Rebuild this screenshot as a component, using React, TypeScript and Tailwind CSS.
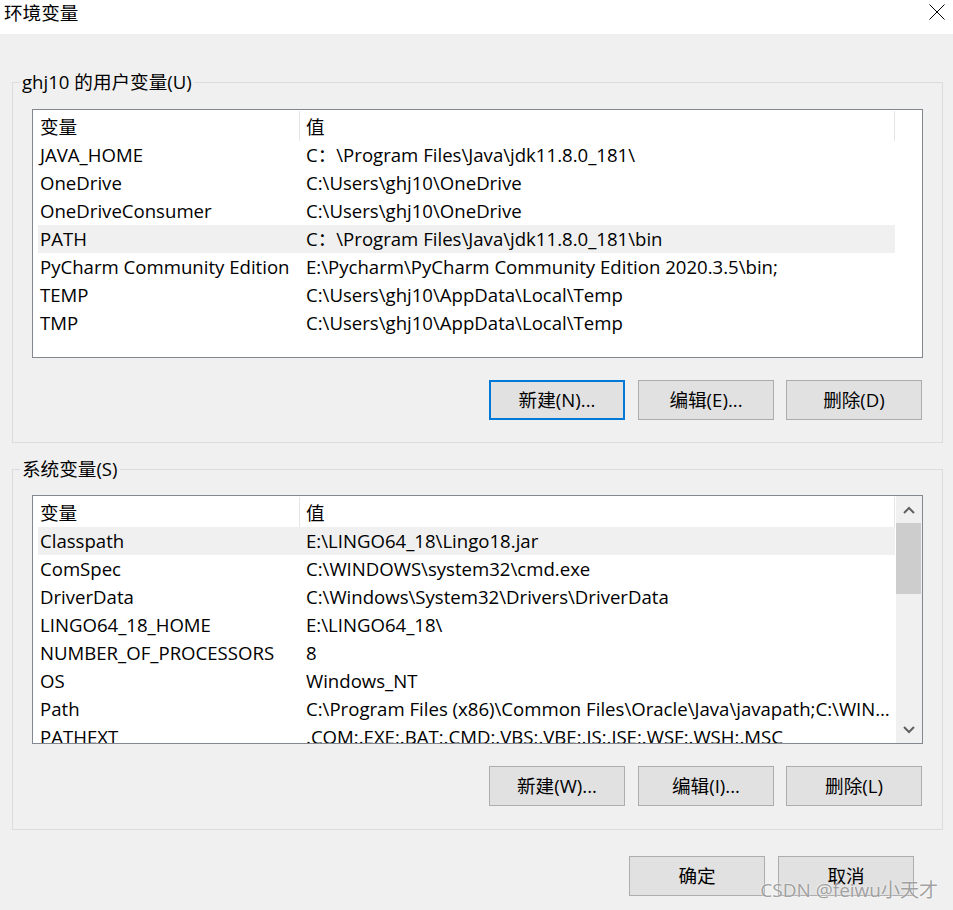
import React from 'react';

type Row = { name: string; value: string };

const USER_VARS: Row[] = [
  { name: 'JAVA_HOME', value: 'C：\\Program Files\\Java\\jdk11.8.0_181\\' },
  { name: 'OneDrive', value: 'C:\\Users\\ghj10\\OneDrive' },
  { name: 'OneDriveConsumer', value: 'C:\\Users\\ghj10\\OneDrive' },
  { name: 'PATH', value: 'C：\\Program Files\\Java\\jdk11.8.0_181\\bin' },
  { name: 'PyCharm Community Edition', value: 'E:\\Pycharm\\PyCharm Community Edition 2020.3.5\\bin;' },
  { name: 'TEMP', value: 'C:\\Users\\ghj10\\AppData\\Local\\Temp' },
  { name: 'TMP', value: 'C:\\Users\\ghj10\\AppData\\Local\\Temp' }
];

const SYSTEM_VARS: Row[] = [
  { name: 'Classpath', value: 'E:\\LINGO64_18\\Lingo18.jar' },
  { name: 'ComSpec', value: 'C:\\WINDOWS\\system32\\cmd.exe' },
  { name: 'DriverData', value: 'C:\\Windows\\System32\\Drivers\\DriverData' },
  { name: 'LINGO64_18_HOME', value: 'E:\\LINGO64_18\\' },
  { name: 'NUMBER_OF_PROCESSORS', value: '8' },
  { name: 'OS', value: 'Windows_NT' },
  {
    name: 'Path',
    value: 'C:\\Program Files (x86)\\Common Files\\Oracle\\Java\\javapath;C:\\WINDOWS\\system32;C:\\WINDOWS'
  },
  { name: 'PATHEXT', value: '.COM;.EXE;.BAT;.CMD;.VBS;.VBE;.JS;.JSE;.WSF;.WSH;.MSC' }
];

const Chevron = ({ up }: { up?: boolean }) => (
  <svg width="12" height="8" viewBox="0 0 12 8">
    <polyline
      points={up ? '1,7 6,2 11,7' : '1,1 6,6 11,1'}
      fill="none"
      stroke="#606060"
      strokeWidth="2"
    />
  </svg>
);

const ListBox = ({ rows, selected, scrollbar }: { rows: Row[]; selected: number; scrollbar?: boolean }) => (
  <div className="h-[249px] border border-[#828790] bg-white flex overflow-hidden">
    <div className="w-[862px] shrink-0 overflow-hidden">
      <div className="h-[31px] flex items-end leading-[28px]">
        <div className="w-[267px] h-[30px] pl-[7px] border-r border-[#e5e5e5] flex items-end">变量</div>
        <div className="flex-1 h-[30px] pl-[6px] border-r border-[#e5e5e5] flex items-end">值</div>
      </div>
      {rows.map((row, i) => (
        <div
          key={row.name}
          className={`h-[28px] ml-[5px] flex items-center leading-[28px] ${i === selected ? 'bg-[#f0f0f0]' : ''}`}
        >
          <div className="w-[261px] shrink-0 pl-[2px] whitespace-nowrap overflow-hidden">{row.name}</div>
          <div className="flex-1 min-w-0 pl-[7px] pr-[1px] truncate">{row.value}</div>
        </div>
      ))}
    </div>
    {scrollbar ? (
      <div className="flex-1 bg-[#f0f0f0] flex flex-col ml-[1px]">
        <div className="h-[27px] flex items-center justify-center">
          <Chevron up />
        </div>
        <div className="h-[71px] bg-[#cdcdcd] mr-[1px]" />
        <div className="flex-1" />
        <div className="h-[27px] flex items-center justify-center">
          <Chevron />
        </div>
      </div>
    ) : (
      <div className="flex-1" />
    )}
  </div>
);

const Button = ({ label, focused, className }: { label: string; focused?: boolean; className?: string }) => (
  <button
    className={`w-[136px] h-[40px] bg-[#e1e1e1] flex items-center justify-center text-black ${
      focused ? 'border-2 border-[#0078d7]' : 'border border-[#adadad]'
    } ${className ?? ''}`}
  >
    {label}
  </button>
);

const Group = ({
  title,
  rows,
  selected,
  scrollbar,
  buttons,
  focusFirst,
  className
}: {
  title: string;
  rows: Row[];
  selected: number;
  scrollbar?: boolean;
  buttons: string[];
  focusFirst?: boolean;
  className?: string;
}) => (
  <fieldset className={`ml-[12px] w-[931px] border border-[#dcdcdc] px-[7px] ${className ?? ''}`}>
    <legend className="px-[2px] leading-[28px]">{title}</legend>
    <div className="px-[12px]">
      <ListBox rows={rows} selected={selected} scrollbar={scrollbar} />
      <div className="mt-[22px] mr-[1px] flex justify-end gap-[12px]">
        {buttons.map((b, i) => (
          <Button key={b} label={b} focused={focusFirst && i === 0} className={i === 0 ? 'mr-[1px]' : ''} />
        ))}
      </div>
    </div>
  </fieldset>
);

export default function App() {
  return (
    <div className="relative w-[953px] h-[910px] bg-[#f0f0f0] overflow-hidden text-[18.6px] text-black font-['Open_Sans','Noto_Sans_CJK_SC',sans-serif]">
      <div className="h-[34px] bg-white flex items-start justify-between">
        <span className="pl-[4px] leading-[25px]">环境变量</span>
        <svg className="mt-[4px] mr-[8px]" width="16" height="16" viewBox="0 0 16 16">
          <path d="M0.5 0.5 L15.5 15.5 M15.5 0.5 L0.5 15.5" stroke="#000" strokeWidth="1" />
        </svg>
      </div>

      <div className="mt-[34px]">
        <Group
          title="ghj10 的用户变量(U)"
          rows={USER_VARS}
          selected={3}
          buttons={['新建(N)...', '编辑(E)...', '删除(D)']}
          focusFirst
          className="pb-[22px] [&>div]:pt-[13px]"
        />
        <Group
          title="系统变量(S)"
          rows={SYSTEM_VARS}
          selected={0}
          scrollbar
          buttons={['新建(W)...', '编辑(I)...', '删除(L)']}
          className="mt-[12px] pb-[23px] [&>div]:pt-[12px]"
        />
        <div className="mt-[26px] flex justify-end gap-[13px] pr-[39px]">
          <Button label="确定" />
          <Button label="取消" />
        </div>
      </div>

      <div className="absolute right-[15px] bottom-[8px] text-[19px] leading-[24px] text-[#8a8a8a]/80 [text-shadow:0_0_2px_#fff]">
        CSDN @feiwu小天才
      </div>
    </div>
  );
}
